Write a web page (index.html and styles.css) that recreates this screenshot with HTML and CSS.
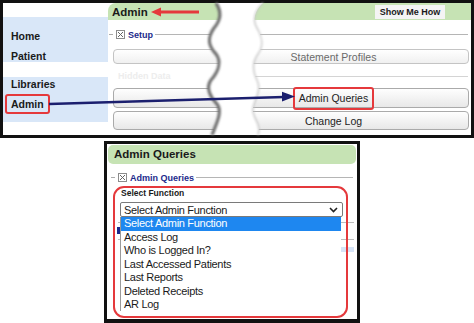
FILE: index.html
```html
<!DOCTYPE html>
<html lang="en">
<head>
    <meta charset="UTF-8">
    <meta name="viewport" content="width=device-width, initial-scale=1.0">
    <title>Admin Queries</title>
    <link rel="stylesheet" href="styles.css">
</head>
<body>
    <div class="shot shot-top">
        <div class="nav">
            <div class="nav-group first">
                <div class="nav-item">Home</div>
                <div class="nav-item">Patient</div>
            </div>
            <div class="nav-group second">
                <div class="nav-item libs">Libraries</div>
                <div class="nav-item admin"><span class="mark">Admin</span></div>
            </div>
        </div>
        <div class="main">
            <div class="title-bar">
                <span class="title">Admin</span>
                <svg class="red-arrow" width="50" height="10" viewBox="0 0 50 10">
                    <path d="M0 5 L10 0.5 L10 9.5 Z" fill="#e5393c"/>
                    <line x1="9" y1="5" x2="48" y2="5" stroke="#e5393c" stroke-width="3"/>
                </svg>
                <span class="help">Show Me How</span>
            </div>
            <div class="legend-row setup">
                <span class="dash"></span>
                <svg class="chk" width="9" height="9" viewBox="0 0 9 9"><rect x="0.5" y="0.5" width="8" height="8" fill="#fff" stroke="#8c8c8c"/><path d="M2 2L7 7M7 2L2 7" stroke="#666"/></svg>
                <span class="legend-text">Setup</span>
                <span class="rule"></span>
            </div>
            <div class="btn faint">Statement Profiles</div>
            <div class="legend-row ghost-row">
                <span class="ghost">Hidden Data</span>
                <span class="rule light"></span>
            </div>
            <div class="btn tall"><span class="mark">Admin Queries</span></div>
            <div class="btn log">Change Log</div>
        </div>
        <svg class="overlay" width="474" height="138" viewBox="0 0 474 138">
            <defs>
                <filter id="soft" x="-50%" y="-10%" width="200%" height="120%">
                    <feGaussianBlur stdDeviation="1.3"/>
                </filter>
            </defs>
            <path d="M216,3 C222,12 221,20 214,28 C207,38 208,46 216,54 C222,62 218,72 211,80 C205,88 211,98 217,104 C223,112 216,124 212,135 L258,135 C262,124 251,116 253,108 C255,98 262,90 257,80 C252,70 252,62 258,54 C264,46 262,36 257,28 C252,20 255,10 263,3 Z" fill="#fff"/>
            <path d="M216,3 C222,12 221,20 214,28 C207,38 208,46 216,54 C222,62 218,72 211,80 C205,88 211,98 217,104 C223,112 216,124 212,135" fill="none" stroke="#6f6f6f" stroke-width="3.2" filter="url(#soft)"/>
            <path d="M258,135 C262,124 251,116 253,108 C255,98 262,90 257,80 C252,70 252,62 258,54 C264,46 262,36 257,28 C252,20 255,10 263,3" fill="none" stroke="#c8c8c8" stroke-width="1.5" filter="url(#soft)"/>
            <line x1="49" y1="104" x2="284" y2="97" stroke="#1b1f6e" stroke-width="2.6"/>
            <path d="M295,96.6 L282,91.8 L282,101.6 Z" fill="#1b1f6e"/>
        </svg>
    </div>

    <div class="shot shot-bottom">
        <div class="panel-head">Admin Queries</div>
        <div class="legend-row aq">
            <span class="dash"></span>
            <svg class="chk" width="9" height="9" viewBox="0 0 9 9"><rect x="0.5" y="0.5" width="8" height="8" fill="#fff" stroke="#8c8c8c"/><path d="M2 2L7 7M7 2L2 7" stroke="#666"/></svg>
            <span class="legend-text">Admin Queries</span>
            <span class="rule"></span>
        </div>
        <div class="field-label">Select Function</div>
        <div class="select">
            <span>Select Admin Function</span>
            <svg class="chevron" width="9" height="6" viewBox="0 0 9 6"><path d="M1 1 L4.5 4.5 L8 1" fill="none" stroke="#222" stroke-width="1.6"/></svg>
        </div>
        <div class="under">
            <div class="under-line"></div>
            <div class="under-mark"></div>
            <div class="under-line"></div>
            <div class="under-bar"></div>
        </div>
        <ul class="options">
            <li class="selected">Select Admin Function</li>
            <li>Access Log</li>
            <li>Who is Logged In?</li>
            <li>Last Accessed Patients</li>
            <li>Last Reports</li>
            <li>Deleted Receipts</li>
            <li>AR Log</li>
        </ul>
        <div class="callout"></div>
    </div>
</body>
</html>
```

FILE: styles.css
```css
* {
    margin: 0;
    padding: 0;
    box-sizing: border-box;
}
body {
    width: 474px;
    height: 323px;
    overflow: hidden;
    background: #fff;
    font-family: "Liberation Sans", Arial, sans-serif;
    color: #1a1a1a;
}
.shot {
    position: relative;
    border: 3px solid #111;
    background: #fff;
}

/* top screenshot */
.shot-top {
    width: 474px;
    height: 138px;
    display: grid;
    grid-template-columns: 105px 1fr;
}
.nav {
    padding-top: 14px;
}
.nav-group {
    background: #d9e7f8;
    padding-left: 8px;
    font-size: 10.5px;
    font-weight: bold;
    height: 45px;
}
.nav-group.first {
    padding-top: 9px;
}
.nav-group.second {
    margin-top: 15px;
}
.nav-item {
    height: 20px;
    display: flex;
    align-items: center;
}
.nav-item.libs {
    height: 13px;
}
.nav-item.admin {
    margin-top: 6px;
    height: 16px;
}
.mark {
    border: 2px solid #e5393c;
    border-radius: 3px;
}
.nav .mark {
    margin-left: -6px;
    padding: 1px 4px;
    line-height: 14px;
}
.main {
    display: flex;
    flex-direction: column;
}
.title-bar {
    height: 17px;
    background: #c6e3b4;
    border-top-left-radius: 8px;
    display: flex;
    align-items: center;
    padding-left: 4px;
}
.title {
    font-size: 11.5px;
    font-weight: bold;
}
.red-arrow {
    margin-left: 3px;
}
.help {
    margin-left: auto;
    margin-right: 26px;
    width: 70px;
    height: 14px;
    line-height: 14px;
    text-align: center;
    background: #f4f4f4;
    font-size: 9px;
    font-weight: bold;
}
.legend-row {
    display: flex;
    align-items: center;
    height: 11px;
}
.legend-row.setup {
    margin-top: 9px;
    padding-left: 1px;
}
.dash {
    width: 4px;
    height: 1px;
    background: #aaa;
    margin-right: 3px;
}
.chk {
    flex: none;
}
.legend-text {
    margin-left: 3px;
    font-size: 9px;
    font-weight: bold;
    color: #1c2a8c;
}
.rule {
    flex: 1;
    height: 1px;
    background: #b5b5b5;
    margin-left: 2px;
    margin-right: 3px;
}
.rule.light {
    background: #d4d4d4;
    margin-left: 80px;
}
.btn {
    margin-left: 5px;
    margin-right: 2px;
    border: 1px solid #aaa;
    border-radius: 4px;
    background: linear-gradient(#fefefe, #e8e8e8);
    font-size: 10.5px;
    color: #222;
    display: flex;
    align-items: center;
    justify-content: center;
    padding-left: 85px;
}
.btn.faint {
    margin-top: 9px;
    height: 15px;
    color: #6a6a6a;
    background: linear-gradient(#fff, #f0f0f0);
    border-color: #c4c4c4;
}
.ghost-row {
    margin-top: 5px;
    height: 14px;
    padding-left: 10px;
}
.ghost {
    font-size: 9px;
    font-weight: bold;
    color: #ededed;
}
.btn.tall {
    margin-top: 5px;
    height: 20px;
}
.btn .mark {
    padding: 2px 4px;
    line-height: 15px;
}
.btn.log {
    margin-top: 3px;
    height: 19px;
}
.overlay {
    position: absolute;
    top: -3px;
    left: -3px;
}

/* bottom screenshot */
.shot-bottom {
    margin: 3px 0 0 104px;
    width: 256px;
    height: 182px;
    border-bottom-width: 4px;
    padding: 1px 1px 0 1px;
}
.panel-head {
    height: 19px;
    background: #c6e3b4;
    border-radius: 5px;
    padding-left: 6px;
    font-size: 11.5px;
    font-weight: bold;
    line-height: 19px;
}
.legend-row.aq {
    margin-top: 8px;
    padding-left: 3px;
}
.field-label {
    margin: 5px 0 0 13px;
    height: 11px;
    line-height: 11px;
    font-size: 8.5px;
    font-weight: bold;
}
.select {
    margin: 3px 0 0 12px;
    width: 223px;
    height: 15px;
    border: 1px solid #7a7a7a;
    border-radius: 2px;
    display: flex;
    align-items: center;
    justify-content: space-between;
    padding: 0 4px 0 3px;
    font-size: 11px;
    letter-spacing: -0.3px;
}
.under-line {
    margin: 5px 2px 0 10px;
    height: 1px;
    background: #bdbdbd;
}
.under-mark {
    margin: 4px 0 0 9px;
    width: 6px;
    height: 7px;
    border-radius: 0 3px 3px 0;
    background: #1c2a8c;
}
.under-bar {
    margin: 7px 2px 0 13px;
    height: 5px;
    background: #d6e4f7;
}
.options {
    position: absolute;
    left: 13px;
    top: 73px;
    width: 221px;
    height: 94px;
    list-style: none;
    background: #fff;
    border-left: 1px solid #9a9a9a;
    font-size: 11px;
    letter-spacing: -0.3px;
}
.options li {
    height: 13.5px;
    line-height: 13.5px;
    padding-left: 3px;
}
.options li.selected {
    background: #1e87f0;
    color: #fff;
}
.callout {
    position: absolute;
    left: 6px;
    top: 42px;
    width: 235px;
    height: 132px;
    border: 2.5px solid #e5393c;
    border-radius: 11px;
}
```
